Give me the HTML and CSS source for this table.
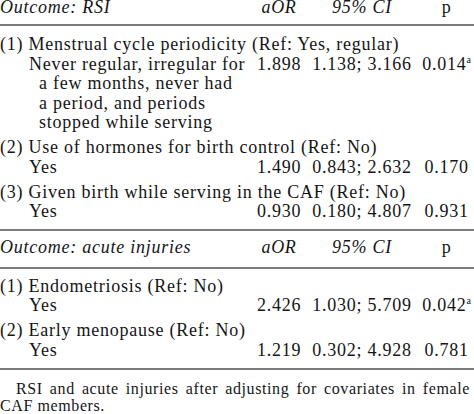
FILE: index.html
```html
<!DOCTYPE html>
<html>
<head>
<meta charset="utf-8">
<link rel="stylesheet" href="styles.css">
</head>
<body>
<table class="tbl">
  <colgroup>
    <col class="c-label"><col class="c-or"><col class="c-ci"><col class="c-p">
  </colgroup>
  <thead>
    <tr class="head">
      <th class="label"><i>Outcome: RSI</i></th>
      <th><i>aOR</i></th>
      <th><i>95% CI</i></th>
      <th>p</th>
    </tr>
  </thead>
  <tbody class="grp">
    <tr class="q first"><td colspan="4">(1) Menstrual cycle periodicity (Ref: Yes, regular)</td></tr>
    <tr class="ans">
      <td class="label sub">Never regular, irregular for<br>a few months, never had<br>a period, and periods<br>stopped while serving</td>
      <td>1.898</td><td>1.138; 3.166</td><td>0.014<sup>a</sup></td>
    </tr>
    <tr class="q"><td colspan="4">(2) Use of hormones for birth control (Ref: No)</td></tr>
    <tr class="ans">
      <td class="label sub">Yes</td>
      <td>1.490</td><td>0.843; 2.632</td><td>0.170</td>
    </tr>
    <tr class="q"><td colspan="4">(3) Given birth while serving in the CAF (Ref: No)</td></tr>
    <tr class="ans last">
      <td class="label sub">Yes</td>
      <td>0.930</td><td>0.180; 4.807</td><td>0.931</td>
    </tr>
  </tbody>
  <tbody>
    <tr class="head head2">
      <th class="label"><i>Outcome: acute injuries</i></th>
      <th><i>aOR</i></th>
      <th><i>95% CI</i></th>
      <th>p</th>
    </tr>
  </tbody>
  <tbody class="grp">
    <tr class="q first2"><td colspan="4">(1) Endometriosis (Ref: No)</td></tr>
    <tr class="ans">
      <td class="label sub">Yes</td>
      <td>2.426</td><td>1.030; 5.709</td><td>0.042<sup>a</sup></td>
    </tr>
    <tr class="q"><td colspan="4">(2) Early menopause (Ref: No)</td></tr>
    <tr class="ans last">
      <td class="label sub">Yes</td>
      <td>1.219</td><td>0.302; 4.928</td><td>0.781</td>
    </tr>
  </tbody>
</table>
<p class="caption">RSI and acute injuries after adjusting for covariates in female CAF members.</p>
</body>
</html>
```

FILE: styles.css
```css
html, body {
  margin: 0;
  padding: 0;
  background: #ffffff;
}
body {
  font-family: "Liberation Serif", "Times New Roman", serif;
  color: #151515;
  overflow: hidden;
}
.tbl {
  border-collapse: collapse;
  table-layout: fixed;
  width: 474px;
  margin-top: -2px;
  font-size: 18px;
  letter-spacing: 0.75px;
  line-height: 19.5px;
}
.c-label { width: 253px; }
.c-or { width: 52px; }
.c-ci { width: 114px; }
.c-p { width: 55px; }
.tbl th, .tbl td {
  padding: 0;
  font-weight: normal;
  text-align: center;
  vertical-align: top;
  white-space: nowrap;
}
.tbl th.label, .tbl td.label, .tbl .q td {
  text-align: left;
}
.head th {
  padding-bottom: 6.5px;
  border-bottom: 2px solid #7c7c7c;
}
.head2 th {
  padding-top: 7px;
  padding-bottom: 9px;
}
.grp {
  border-bottom: 2px solid #7c7c7c;
}
.q td { padding-top: 5.5px; }
.q.first td { padding-top: 9px; }
.q.first2 td { padding-top: 8px; }
.ans.last td { padding-bottom: 7.5px; }
.sub {
  padding-left: 39px !important;
  text-indent: -10px;
}
sup {
  font-size: 10px;
  letter-spacing: 0;
  line-height: 0;
  vertical-align: 7px;
}
.caption {
  margin: 10px 0 0 0;
  width: 470px;
  font-size: 16px;
  letter-spacing: 0.6px;
  line-height: 17.3px;
  text-align: justify;
  text-indent: 16px;
}
```
